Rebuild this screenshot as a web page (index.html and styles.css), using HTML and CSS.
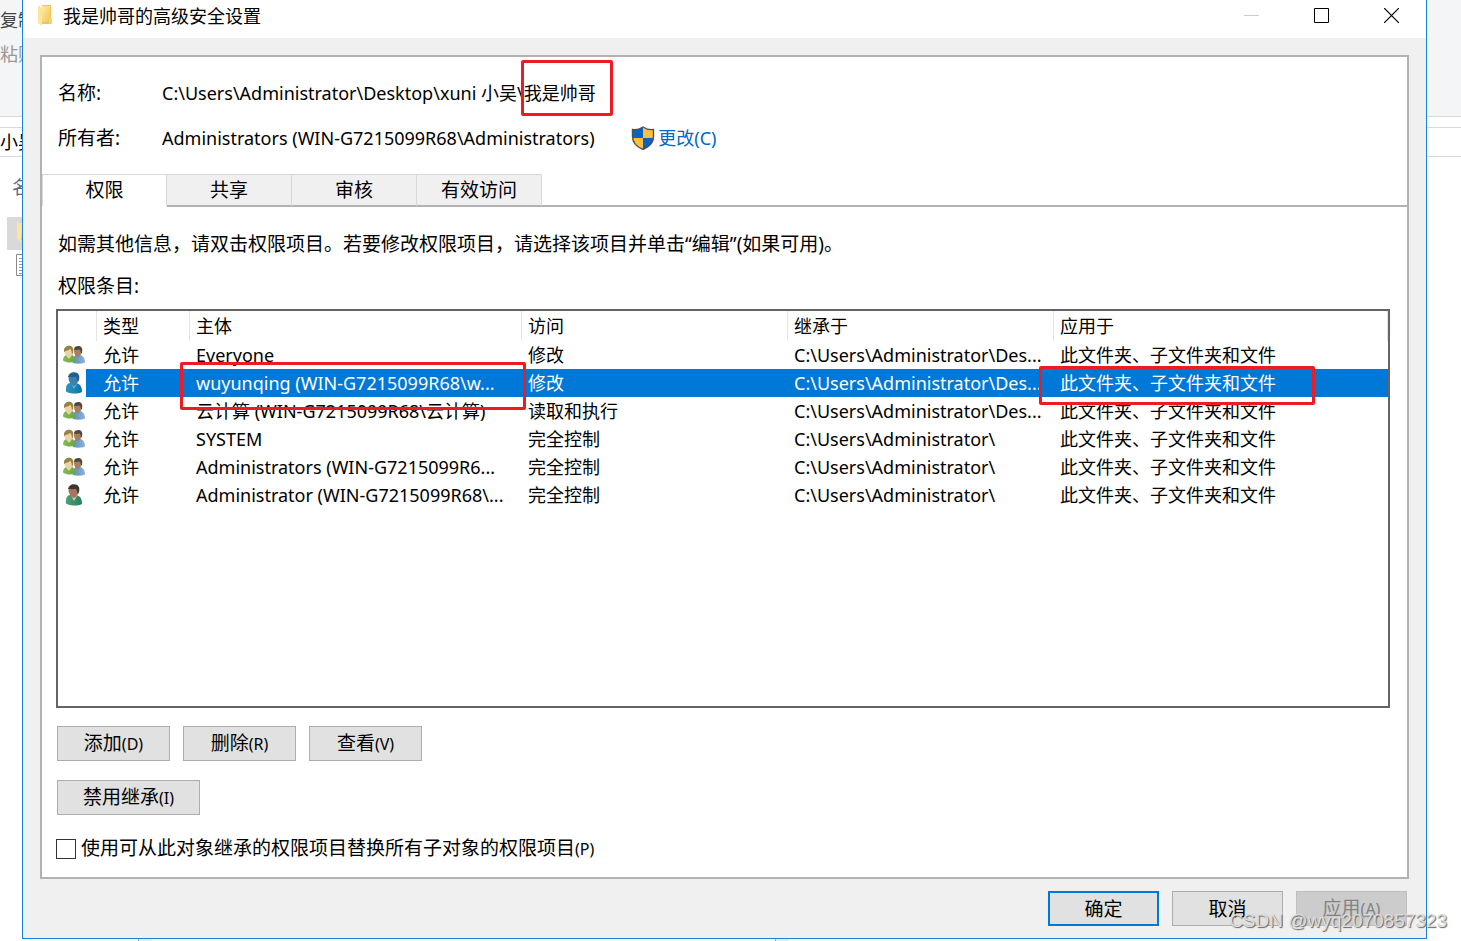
FILE: index.html
```html
<!DOCTYPE html>
<html lang="zh-CN">
<head>
  <meta charset="UTF-8">
  <meta name="viewport" content="width=device-width, initial-scale=1.0">
  <title>我是帅哥的高级安全设置</title>
  <link rel="stylesheet" href="styles.css">
</head>
<body>
  <!-- shared icons -->
  <svg class="defs" aria-hidden="true">
    <defs>
      <linearGradient id="gFolder" x1="0" x2="1" y1="0" y2="1">
        <stop offset="0" stop-color="#ffe9a6"/>
        <stop offset="1" stop-color="#f0c659"/>
      </linearGradient>
      <linearGradient id="gGreen" x1="0" x2="1">
        <stop offset="0" stop-color="#86b955"/>
        <stop offset="1" stop-color="#6ba546"/>
      </linearGradient>
      <linearGradient id="gBlue" x1="0" x2="1">
        <stop offset="0" stop-color="#5b8fc0"/>
        <stop offset="1" stop-color="#8fb2dc"/>
      </linearGradient>
      <linearGradient id="gTeal" x1="0" x2="1">
        <stop offset="0" stop-color="#4f9f7c"/>
        <stop offset="1" stop-color="#26835b"/>
      </linearGradient>
      <linearGradient id="gSel" x1="0" x2="1">
        <stop offset="0" stop-color="#2f95bd"/>
        <stop offset="1" stop-color="#0c74ab"/>
      </linearGradient>
    </defs>
    <symbol id="folder" viewBox="0 0 16 22">
      <path d="M5 0h9v13l1 1v5H5z" fill="#eec558"/>
      <path d="M5 1h8v16H5z" fill="url(#gFolder)"/>
      <path d="M1 0l4 3v18l-4-3z" fill="#ffe49a"/>
      <path d="M12 13h3v6h-3z" fill="#f5d274"/>
    </symbol>
    <symbol id="group" viewBox="0 0 24 20">
      <path d="M11 18c-1-5 1-7.500 4-8h3c3 .5 5 3 5 7.500-3 1.500-8 1.500-12 .5z" fill="url(#gBlue)"/>
      <path d="M12 5.500c0-2 1.500-3.500 4-3.500s4 2 3.500 5c-.5 3-2 5-4 5s-3.500-3-3.500-6.500z" fill="#a97d5a"/>
      <path d="M11.800 4.500C12 2 14 1 16.500 1c3 0 4.500 2.500 3.500 6.500l-1 1.500c0-2-.5-3.500-1.500-4.500-2 .5-4 .5-5.700 0z" fill="#4f4a46"/>
      <path d="M1 15.500c0-3.500 1.500-5.500 5-6h3c2.500.5 4 3 4.500 7-4 1.500-9 1.500-12.500-1z" fill="url(#gGreen)"/>
      <path d="M2 7C2 3 4 1 7 1s4.500 2 4 6l-1.500 4L7 14 4.500 11z" fill="#ecd3a6"/>
      <path d="M2 7C1.500 3 4 .8 7 .8c3.500 0 4.800 2.700 4.200 6.200L10 10.500C10 7 9.500 5 8 4 6.500 5.500 4 5.500 2 7z" fill="#958444"/>
    </symbol>
    <symbol id="user" viewBox="0 0 18 22">
      <path d="M1 19.500C.5 14 2 11.500 5 11h6c4 .8 6 3.500 6 9-4.500 2.200-12 2-16-.5z" fill="url(#gTeal)"/>
      <path d="M5.500 11l3.500 6 3-5-1-2z" fill="#dfc5ac"/>
      <path d="M3.500 5.500C3.500 3 6 1.500 9 1.500S13.500 4 13 7.500c-.5 3.500-2 6-4 6.500-3-.5-5.500-4.500-5.500-8.500z" fill="#a8765a"/>
      <path d="M3.200 5C3.500 2 6 .2 9 .2c4.500 0 6.200 3.300 5 7.800L12.500 11c0-2.500-.5-4.500-1.500-6C8.500 5.300 5.500 5 3.200 5z" fill="#3b3734"/>
    </symbol>
    <symbol id="user-selected" viewBox="0 0 18 22">
      <path d="M1 19.500C.5 14 2 11.500 5 11h6c4 .8 6 3.500 6 9-4.500 2.200-12 2-16-.5z" fill="url(#gSel)"/>
      <path d="M5.500 11l3.500 6 3-5-1-2z" fill="#6fa9cf"/>
      <path d="M3.500 5.500C3.500 3 6 1.500 9 1.500S13.500 4 13 7.500c-.5 3.500-2 6-4 6.500-3-.5-5.500-4.500-5.500-8.500z" fill="#3d80b0"/>
      <path d="M3.200 5C3.500 2 6 .2 9 .2c4.500 0 6.200 3.300 5 7.800L12.500 11c0-2.500-.5-4.500-1.500-6C8.500 5.300 5.500 5 3.200 5z" fill="#235e8c"/>
    </symbol>
  </svg>

  <!-- file explorer behind the dialog -->
  <div class="explorer" aria-hidden="true">
    <div class="ribbon">
      <span>复制</span>
      <span class="dim">粘贴</span>
    </div>
    <div class="address">小吴</div>
    <div class="column-name">名称</div>
    <div class="file selected"><svg width="16" height="22"><use href="#folder"/></svg></div>
    <div class="file">
      <svg width="16" height="22" viewBox="0 0 16 22">
        <path d="M.5.500h15v21H.5z" fill="#fff" stroke="#8a8a8a"/>
        <path d="M3 4.500h10M3 7.500h10M3 10.500h10M3 13.500h10M3 16.500h10M3 19.500h10" stroke="#9a9a9a"/>
      </svg>
    </div>
    <div class="scroll-bits"><i></i><i></i></div>
  </div>

  <div class="dialog" role="dialog" aria-labelledby="dialogTitle">
    <header class="titlebar">
      <svg class="title-icon" width="16" height="22"><use href="#folder"/></svg>
      <h1 id="dialogTitle">我是帅哥的高级安全设置</h1>
      <div class="window-buttons">
        <button type="button" aria-label="最小化" disabled><svg width="15" height="15"><path d="M0 7.500h15" stroke="#ccc"/></svg></button>
        <button type="button" aria-label="最大化"><svg width="15" height="15"><path d="M.5.500h14v14H.5z" fill="none" stroke="#000"/></svg></button>
        <button type="button" aria-label="关闭"><svg width="15" height="15"><path d="M0 0l15 15M15 0L0 15" stroke="#000" stroke-width="1.200"/></svg></button>
      </div>
    </header>

    <main class="panel">
      <dl class="object-info">
        <dt>名称:</dt>
        <dd>C:\Users\Administrator\Desktop\xuni 小吴\<span class="marked">我是帅哥<i class="mark mark-name"></i></span></dd>
        <dt>所有者:</dt>
        <dd>
          Administrators (WIN-G7215099R68\Administrators)
          <a class="change" href="#">
            <svg width="24" height="24" viewBox="0 0 24 24">
              <path d="M12 1C9 3 5 4 1.500 3.500v7C1.500 17 6 21 12 23.500 18 21 22.500 17 22.500 10.500v-7C19 4 15 3 12 1z" fill="#ffbf3c"/>
              <path d="M12 1C9 3 5 4 1.500 3.500V12H12zM12 12h10.400C22 18 17.500 21.500 12 23.500z" fill="#0563c6"/>
              <path d="M12 1C9 3 5 4 1.500 3.500v7C1.500 17 6 21 12 23.500 18 21 22.500 17 22.500 10.500v-7C19 4 15 3 12 1z" fill="none" stroke="#4d5055" stroke-width="1.400"/>
            </svg>更改(C)</a>
        </dd>
      </dl>

      <div class="tabs" role="tablist">
        <button type="button" role="tab" class="tab active" aria-selected="true">权限</button>
        <button type="button" role="tab" class="tab">共享</button>
        <button type="button" role="tab" class="tab">审核</button>
        <button type="button" role="tab" class="tab">有效访问</button>
      </div>

      <section class="tab-page">
        <p>如需其他信息，请双击权限项目。若要修改权限项目，请选择该项目并单击“编辑”(如果可用)。</p>
        <p id="entriesLabel">权限条目:</p>

        <div class="list-box">
          <table class="entries" aria-labelledby="entriesLabel">
            <colgroup>
              <col class="col-icon">
              <col class="col-type">
              <col class="col-principal">
              <col class="col-access">
              <col class="col-inherited">
              <col>
            </colgroup>
            <thead>
              <tr><th></th><th>类型</th><th>主体</th><th>访问</th><th>继承于</th><th>应用于</th></tr>
            </thead>
            <tbody>
              <tr>
                <td><svg width="24" height="20"><use href="#group"/></svg></td>
                <td>允许</td>
                <td>Everyone</td>
                <td>修改</td>
                <td>C:\Users\Administrator\Des...</td>
                <td>此文件夹、子文件夹和文件</td>
              </tr>
              <tr class="selected">
                <td><svg width="18" height="22"><use href="#user-selected"/></svg></td>
                <td>允许</td>
                <td class="marked">wuyunqing (WIN-G7215099R68\w...<i class="mark mark-principal"></i></td>
                <td>修改</td>
                <td>C:\Users\Administrator\Des...</td>
                <td class="marked">此文件夹、子文件夹和文件<i class="mark mark-applies"></i></td>
              </tr>
              <tr>
                <td><svg width="24" height="20"><use href="#group"/></svg></td>
                <td>允许</td>
                <td>云计算 (WIN-G7215099R68\云计算)</td>
                <td>读取和执行</td>
                <td>C:\Users\Administrator\Des...</td>
                <td>此文件夹、子文件夹和文件</td>
              </tr>
              <tr>
                <td><svg width="24" height="20"><use href="#group"/></svg></td>
                <td>允许</td>
                <td>SYSTEM</td>
                <td>完全控制</td>
                <td>C:\Users\Administrator\</td>
                <td>此文件夹、子文件夹和文件</td>
              </tr>
              <tr>
                <td><svg width="24" height="20"><use href="#group"/></svg></td>
                <td>允许</td>
                <td>Administrators (WIN-G7215099R6...</td>
                <td>完全控制</td>
                <td>C:\Users\Administrator\</td>
                <td>此文件夹、子文件夹和文件</td>
              </tr>
              <tr>
                <td><svg width="18" height="22"><use href="#user"/></svg></td>
                <td>允许</td>
                <td>Administrator (WIN-G7215099R68\...</td>
                <td>完全控制</td>
                <td>C:\Users\Administrator\</td>
                <td>此文件夹、子文件夹和文件</td>
              </tr>
            </tbody>
          </table>
        </div>

        <div class="actions">
          <button type="button" class="btn">添加<small>(D)</small></button>
          <button type="button" class="btn">删除<small>(R)</small></button>
          <button type="button" class="btn">查看<small>(V)</small></button>
        </div>
        <div class="actions">
          <button type="button" class="btn wide">禁用继承<small>(I)</small></button>
        </div>
        <label class="check">
          <input type="checkbox">
          <span>使用可从此对象继承的权限项目替换所有子对象的权限项目<small>(P)</small></span>
        </label>
      </section>
    </main>

    <footer class="dialog-footer">
      <button type="button" class="btn default">确定</button>
      <button type="button" class="btn">取消</button>
      <button type="button" class="btn" disabled>应用<small>(A)</small></button>
    </footer>
  </div>

  <div class="watermark">CSDN @wyq2070857323</div>
</body>
</html>
```
FILE: styles.css
```css
* {
  box-sizing: border-box;
}
body {
  margin: 0;
  height: 100vh;
  overflow: hidden;
  position: relative;
  background: #fff;
  color: #000;
  font-family: "Noto Sans", "Noto Sans CJK SC", sans-serif;
  font-size: 19px;
  line-height: 28px;
}
button {
  font: inherit;
  color: inherit;
}
svg {
  display: block;
  flex: none;
}
p, h1, dl, dd {
  margin: 0;
}
small {
  font-size: 16px;
}
.defs {
  position: absolute;
  width: 0;
  height: 0;
}

/* explorer window in the background */
.explorer {
  height: 100%;
  display: flex;
  flex-direction: column;
  font-size: 18px;
}
.ribbon {
  height: 117px;
  padding-top: 6px;
  background: #f4f5f7;
  border-bottom: 1px solid #dadbdc;
  display: flex;
  flex-direction: column;
  gap: 6px;
  color: #444;
}
.ribbon .dim {
  color: #999;
}
.address {
  height: 30px;
  margin: 10px 0 16px;
  border: 1px solid #d9d9d9;
  border-width: 1px 0;
}
.column-name {
  padding-left: 12px;
  margin-bottom: 16px;
  color: #5a6b8c;
}
.file {
  width: 120px;
  height: 33px;
  margin-left: 7px;
  padding: 4px 9px;
}
.file.selected {
  background: #d9d9d9;
}
.scroll-bits {
  margin-top: auto;
  padding: 0 46% 0 138px;
  display: flex;
  justify-content: space-between;
}
.scroll-bits i {
  width: 14px;
  height: 3px;
  background: #e9ebee;
  border-left: 1px solid #aaa;
}

/* dialog window */
.dialog {
  position: absolute;
  inset: -8px 34px 2px 22px;
  display: flex;
  flex-direction: column;
  background: #f0f0f0;
  border: 1px solid #1883d7;
}
.titlebar {
  height: 45px;
  padding: 6px 27px 6px 14px;
  display: flex;
  align-items: center;
  background: #fff;
}
.titlebar h1 {
  flex: 1;
  margin-left: 10px;
  font-size: 18px;
  font-weight: 400;
}
.window-buttons {
  display: flex;
  gap: 55px;
}
.window-buttons button {
  padding: 0;
  border: 0;
  background: none;
}
.panel {
  flex: 1;
  margin: 17px 17px 0;
  display: flex;
  flex-direction: column;
  background: #fff;
  border: 2px solid #b2b2b2;
}
.object-info {
  padding: 22px 16px;
  display: grid;
  grid-template-columns: 104px 1fr;
  row-gap: 17px;
}
.object-info dd {
  display: flow-root;
  font-size: 18px;
}
.change {
  margin-left: 32px;
  display: inline-flex;
  align-items: center;
  vertical-align: top;
  gap: 3px;
  color: #0066cc;
  text-decoration: none;
}

/* tabs */
.tabs {
  display: flex;
}
.tabs::after {
  content: "";
  flex: 1;
  border-bottom: 2px solid #b2b2b2;
}
.tab {
  width: 125px;
  height: 33px;
  padding: 0;
  background: #f0f0f0;
  border: 1px solid #d9d9d9;
  border-left: 0;
  border-bottom: 2px solid #b2b2b2;
}
.tab.active {
  background: #fff;
  border-left: 1px solid #d9d9d9;
  border-bottom-color: #fff;
}
.tab-page {
  flex: 1;
  padding: 23px 17px 14px 14px;
  display: flex;
  flex-direction: column;
}
.tab-page p {
  margin: 0 2px 14px;
}

/* permission entries */
.list-box {
  flex: 1;
  margin-top: -5px;
  margin-bottom: 18px;
  border: 2px solid #646464;
}
.entries {
  width: 100%;
  table-layout: fixed;
  border-collapse: separate;
  border-spacing: 0;
  font-size: 18px;
}
.col-icon {
  width: 39px;
}
.col-type {
  width: 93px;
}
.col-principal {
  width: 332px;
}
.col-access,
.col-inherited {
  width: 266px;
}
.entries th {
  height: 30px;
  padding: 0 6px;
  border-right: 1px solid #e5e5e5;
  font-weight: 400;
  line-height: 28px;
  text-align: left;
}
.entries td {
  height: 28px;
  padding: 0 6px;
  white-space: nowrap;
}
.entries td:first-child {
  padding: 0 11px 0 4px;
}
.entries td svg {
  margin: 0 auto;
}
.entries .selected td {
  background: #0078d7;
  color: #fff;
}
.entries .selected td:first-child {
  background: linear-gradient(to right, #fff 28px, #0078d7 28px);
}

/* red highlight frames */
.marked {
  position: relative;
}
.mark {
  position: absolute;
  z-index: 1;
  border: 3px solid #ed1c24;
  border-radius: 2px;
}
.mark-name {
  inset: -21px -17px -11px -3px;
}
.mark-principal {
  inset: -7px -4px -13px -10px;
}
.mark-applies {
  inset: -3px 73px -8px -15px;
}

/* buttons */
.actions {
  display: flex;
  gap: 13px;
  margin: 0 1px 19px;
}
.btn {
  width: 113px;
  height: 35px;
  padding: 0;
  background: #e1e1e1;
  border: 1px solid #adadad;
}
.btn.wide {
  width: 143px;
}
.btn.default {
  border: 2px solid #0078d7;
}
.btn:disabled {
  background: #ccc;
  border-color: #bfbfbf;
  color: #838383;
}
.check {
  display: flex;
  align-items: center;
  gap: 5px;
}
.check input {
  appearance: none;
  width: 20px;
  height: 20px;
  margin: 0;
  border: 1px solid #333;
  background: #fff;
}
.dialog-footer {
  padding: 12px 19px;
  display: flex;
  justify-content: flex-end;
  gap: 13px;
}
.dialog-footer .btn {
  width: 111px;
}

.watermark {
  position: absolute;
  right: 14px;
  bottom: 6px;
  color: #ddd;
  font-family: "Liberation Sans", sans-serif;
  font-size: 19px;
  text-shadow: 1px 1px 1px #666;
}
```
